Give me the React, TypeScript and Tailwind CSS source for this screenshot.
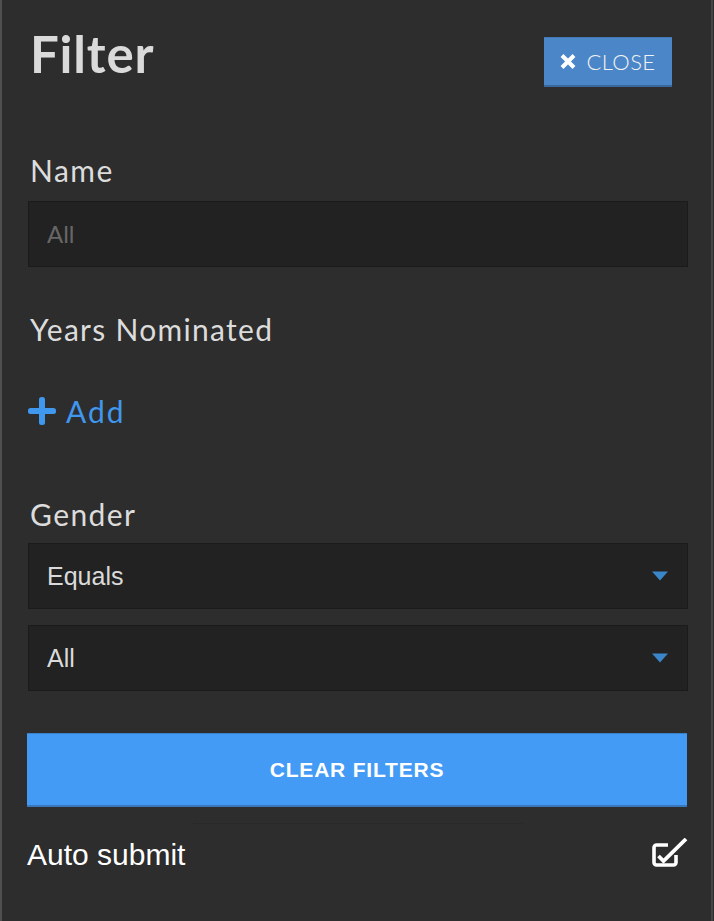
import React from "react";

const lato = "font-['Lato','Noto_Sans',sans-serif]";
const arial = "font-['Liberation_Sans','Arial',sans-serif]";

function Caret() {
  return (
    <svg width="16" height="10" viewBox="0 0 16 10" className="shrink-0">
      <path d="M0 0.5 H16 L8 9.5 Z" fill="#3a86c8" />
    </svg>
  );
}

function SelectBox({ value }: { value: string }) {
  return (
    <div className="flex h-[66px] items-center justify-between border border-[#1b1b1b] bg-[#222222] pl-[18px] pr-[19px]">
      <span className={`${arial} text-[25px] leading-[30px] text-[#dadada]`}>{value}</span>
      <Caret />
    </div>
  );
}

export default function App() {
  return (
    <div className="min-h-[921px] w-[714px] bg-[#2b2b2b]">
      <div className="flex min-h-[921px] w-[713px] flex-col border-l-2 border-r-2 border-l-[#505050] border-r-[#454545] bg-[#2d2d2d] pl-[26px] pr-[23px]">
        {/* Header */}
        <div className="flex items-start justify-between pt-[28px]">
          <h1 className={`${lato} ml-[2px] text-[51px] font-bold leading-[51px] tracking-[0.8px] text-[#dadada]`}>Filter</h1>
          <button className="mt-[9px] mr-[16px] flex h-[50px] w-[128px] items-center justify-center gap-[10px] border-t border-b-2 border-t-[#4178b6] border-b-[#3a679c] bg-[#4a86c8]">
            <svg width="16" height="15" viewBox="0 0 16 15">
              <path d="M2 1.5 L14 13.5 M14 1.5 L2 13.5" stroke="#ffffff" strokeWidth="4" strokeLinecap="butt" />
            </svg>
            <span className={`${lato} text-[22px] font-light leading-[22px] tracking-[0.4px] text-[#f2f2f2]`}>CLOSE</span>
          </button>
        </div>

        {/* Name */}
        <label className={`${lato} ml-[2px] mt-[68px] block text-[30px] leading-[30px] tracking-[1.5px] text-[#dcdcdc]`}>Name</label>
        <div className="mt-[16px] flex h-[66px] items-center border border-[#1b1b1b] bg-[#222222] pl-[18px]">
          <span className={`${lato} text-[24px] leading-[30px] text-[#676767]`}>All</span>
        </div>

        {/* Years Nominated */}
        <label className={`${lato} ml-[2px] mt-[47px] block text-[30px] leading-[30px] tracking-[1.3px] text-[#dcdcdc]`}>Years Nominated</label>
        <div className="mt-[52px] flex h-[30px] items-center gap-[10px]">
          <svg width="28" height="28" viewBox="0 0 28 28" className="shrink-0">
            <rect x="11" y="0" width="6" height="28" rx="2.5" fill="#3f97ee" />
            <rect x="0" y="11" width="28" height="6" rx="2.5" fill="#3f97ee" />
          </svg>
          <span className={`${lato} text-[30px] leading-[30px] tracking-[2px] text-[#3f97ee]`}>Add</span>
        </div>

        {/* Gender */}
        <label className={`${lato} ml-[2px] mt-[73px] block text-[30px] leading-[30px] tracking-[1.4px] text-[#dcdcdc]`}>Gender</label>
        <div className="mt-[14px]">
          <SelectBox value="Equals" />
        </div>
        <div className="mt-[16px]">
          <SelectBox value="All" />
        </div>

        {/* Clear filters */}
        <button className="mt-[42px] -ml-[1px] flex h-[74px] w-[660px] items-center justify-center border-t border-b-2 border-t-[#3a80c8] border-b-[#3978bd] bg-[#449bf6]">
          <span className={`${arial} text-[21px] font-bold leading-[24px] tracking-[0.8px] text-[#ffffff]`}>CLEAR FILTERS</span>
        </button>

        {/* faint divider */}
        <div className="mt-[16px] flex h-px justify-center">
          <div className="h-px w-[330px] bg-[#292929]" />
        </div>

        {/* Auto submit */}
        <div className="mt-[16px] flex items-start justify-between">
          <span className={`${arial} -ml-[1px] text-[30px] leading-[30px] text-[#ffffff]`}>Auto submit</span>
          <svg width="36" height="31" viewBox="0 0 36 31" className="-mt-[2px] shrink-0">
            <path
              d="M16 7 H4.5 a2.5 2.5 0 0 0 -2.5 2.5 V24.5 a2.5 2.5 0 0 0 2.5 2.5 H21.5 a2.5 2.5 0 0 0 2.5 -2.5 V17"
              fill="none"
              stroke="#ffffff"
              strokeWidth="3.6"
            />
            <path d="M6.5 18 L11.5 23 L34 1" fill="none" stroke="#ffffff" strokeWidth="3.8" strokeLinejoin="miter" />
          </svg>
        </div>
      </div>
    </div>
  );
}
